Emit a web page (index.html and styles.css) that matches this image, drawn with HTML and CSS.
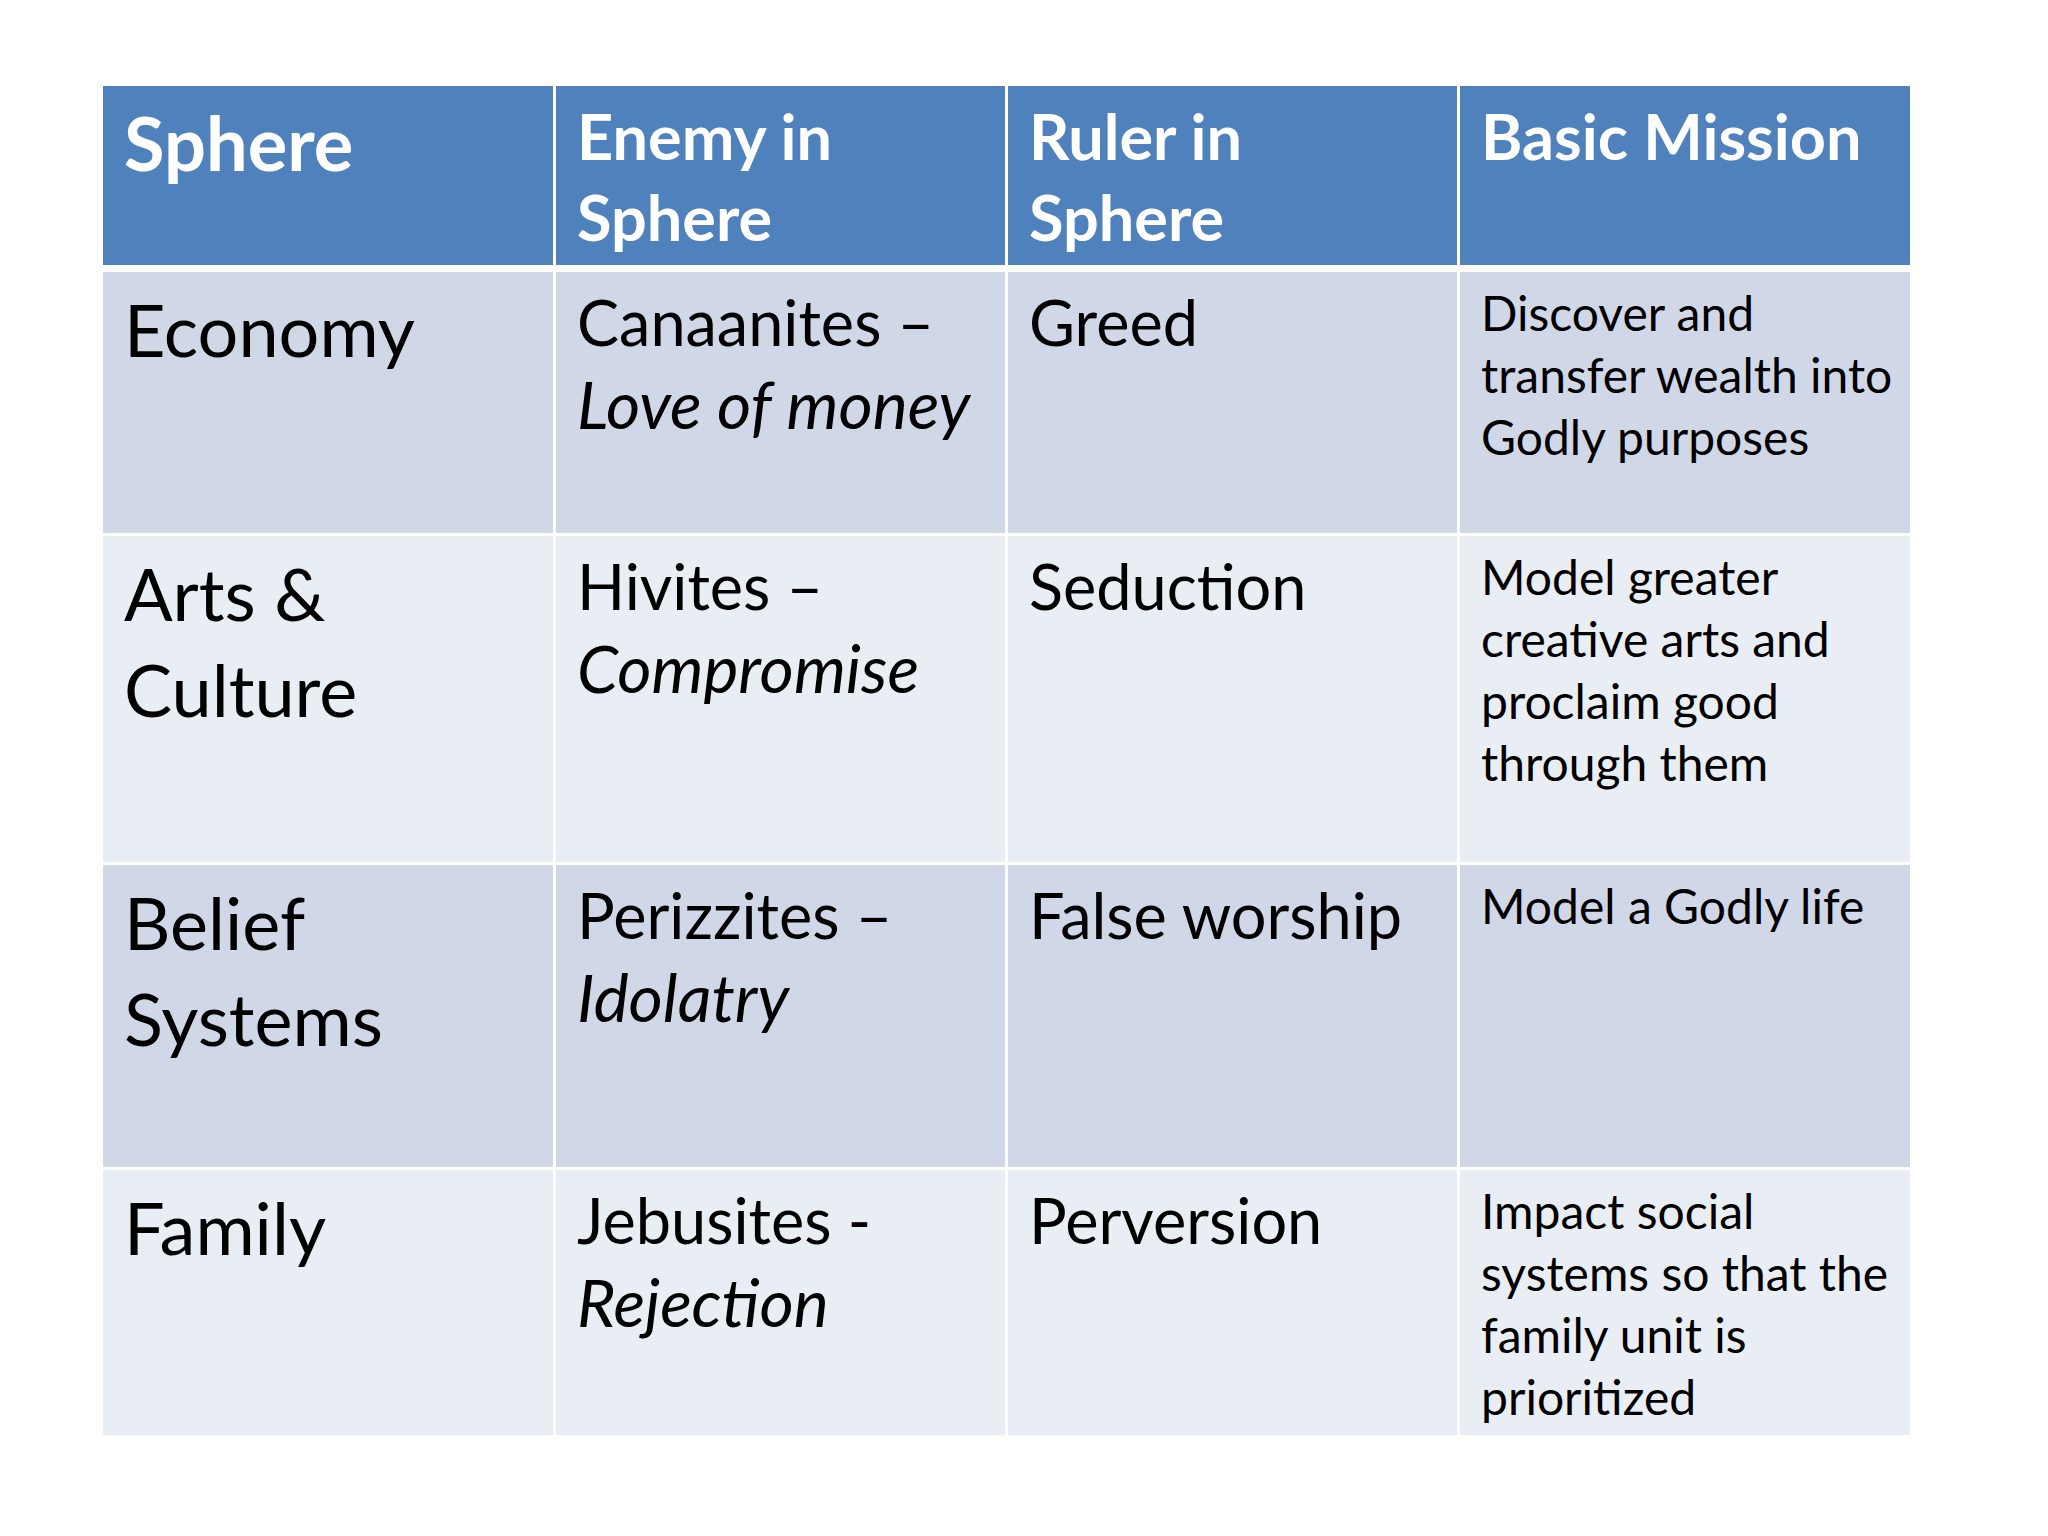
FILE: index.html
```html
<!DOCTYPE html>
<html>
<head>
<meta charset="utf-8">
<link rel="stylesheet" href="styles.css">
</head>
<body>
<div class="slide">
  <div class="table">
    <div class="row head">
      <div class="cell c1">Sphere</div>
      <div class="cell">Enemy in<br>Sphere</div>
      <div class="cell">Ruler in<br>Sphere</div>
      <div class="cell">Basic Mission</div>
    </div>
    <div class="row band r1">
      <div class="cell c1">Economy</div>
      <div class="cell">Canaanites –<br><i>Love of money</i></div>
      <div class="cell">Greed</div>
      <div class="cell c4">Discover and transfer wealth into Godly purposes</div>
    </div>
    <div class="row plain r2">
      <div class="cell c1">Arts &amp; Culture</div>
      <div class="cell">Hivites –<br><i>Compromise</i></div>
      <div class="cell">Seduction</div>
      <div class="cell c4">Model greater creative arts and proclaim good through them</div>
    </div>
    <div class="row band r3">
      <div class="cell c1">Belief Systems</div>
      <div class="cell">Perizzites –<br><i>Idolatry</i></div>
      <div class="cell">False worship</div>
      <div class="cell c4">Model a Godly life</div>
    </div>
    <div class="row plain r4">
      <div class="cell c1">Family</div>
      <div class="cell">Jebusites -<br><i>Rejection</i></div>
      <div class="cell">Perversion</div>
      <div class="cell c4">Impact social systems so that the family unit is prioritized</div>
    </div>
  </div>
</div>
</body>
</html>
```

FILE: styles.css
```css
html, body {
  margin: 0;
  padding: 0;
  background: #ffffff;
}
.slide {
  width: 2048px;
  height: 1536px;
  padding: 86px 0 0 103px;
  box-sizing: border-box;
  font-family: Lato, "Open Sans", sans-serif;
  color: #000;
}
.table {
  width: 1807px;
  display: flex;
  flex-direction: column;
  gap: 3px;
}
.row {
  display: grid;
  grid-template-columns: 450px 449px 449px 450px;
  column-gap: 3px;
}
.cell {
  padding: 9px 8px 0 21px;
  font-size: 63px;
  line-height: 82px;
  overflow: hidden;
}
.cell i {
  font-style: italic;
  font-size: 66px;
}
.c1 {
  font-size: 72px;
  line-height: 96px;
  padding-top: 9px;
}
.c4 {
  font-size: 48px;
  line-height: 62px;
  padding-top: 10px;
}
.head {
  height: 179px;
  margin-bottom: 4px;
}
.head .cell {
  background: #4f81bd;
  color: #ffffff;
  font-weight: bold;
  font-size: 63px;
  line-height: 81px;
  padding-top: 9px;
}
.head .c1 {
  font-size: 74px;
  line-height: 93px;
  padding-top: 10px;
}
.band .cell {
  background: #d0d8e8;
}
.plain .cell {
  background: #e9edf4;
}
.r1 { height: 261px; }
.r2 { height: 326px; }
.r3 { height: 302px; }
.r4 { height: 265px; }
```
